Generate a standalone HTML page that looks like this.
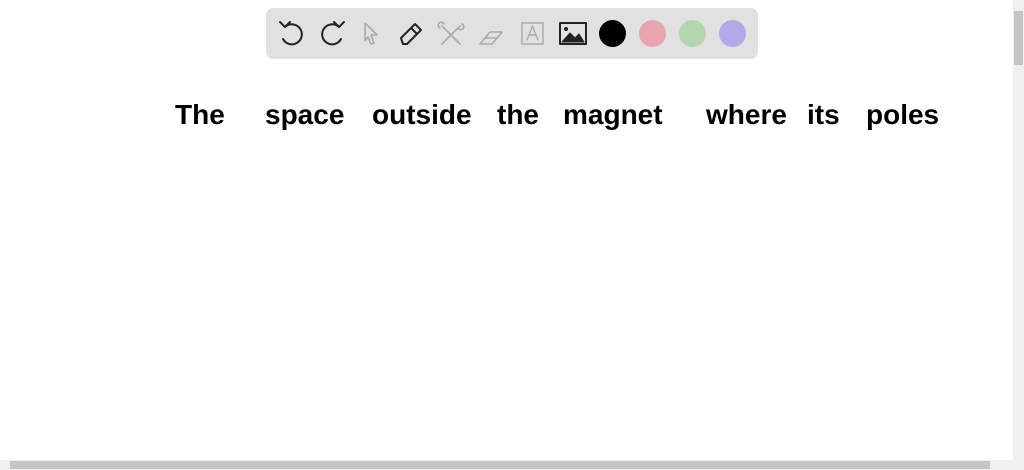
<!DOCTYPE html>
<html><head><style>
html,body{margin:0;padding:0;width:1024px;height:470px;overflow:hidden;background:#fff;position:relative;font-family:"Liberation Sans",sans-serif}
.tb{position:absolute;left:266px;top:8px;width:492px;height:51px;background:#e1e1e1;border-radius:7px}
.dot{position:absolute;top:12px;width:27px;height:27px;border-radius:50%}
.w{position:absolute;top:99px;font-size:28px;font-weight:bold;color:#000;white-space:nowrap;font-family:"Liberation Sans",sans-serif}
.vs{position:absolute;right:0;top:0;width:11px;height:460px;background:#f0f0f0}
.vt{position:absolute;right:1px;top:11px;width:9px;height:54px;background:#c4c4c4}
.hs{position:absolute;left:0;bottom:0;width:1024px;height:10px;background:#f0f0f0}
.ht{position:absolute;left:10px;bottom:1px;width:980px;height:8px;background:#c4c4c4}
</style></head><body>
<div class="tb">
<svg width="492" height="51" viewBox="0 0 492 51" fill="none" stroke-linecap="round" stroke-linejoin="round">
 <g stroke="#222" stroke-width="2">
  <path d="M19 19 A10 10 0 1 1 17 31"/><path d="M14 14 L19 19 L24 14"/>
  <path d="M73 19 A10 10 0 1 0 75 31"/><path d="M78 14 L73 19 L68 14"/>
 </g>
 <path d="M99 15 L111 27 L105 27 L108 35 L105 36 L102 29 L99 33 Z" stroke="#aaa" stroke-width="1.6"/>
 <path d="M137 36 L135 30 L149 16 L155 22 L141 36 Z M145 20 L151 26" stroke="#222" stroke-width="2"/>
 <g stroke="#aaa" stroke-width="1.6"><path d="M176 18 L194 36 M194 18 L176 36 M174 20 A3 3 0 1 1 178 16 M196 16 A3 3 0 1 1 192 20"/></g>
 <path d="M214 36 L224 24 L236 24 L226 36 Z M219 30 L231 30" stroke="#aaa" stroke-width="1.6"/>
 <rect x="256" y="15" width="21" height="21" stroke="#aaa" stroke-width="1.4"/>
 <path d="M261 32 L266.5 18 L272 32 M263 27 L270 27" stroke="#aaa" stroke-width="1.4"/>
 <rect x="294" y="15" width="26" height="21" stroke="#222" stroke-width="2"/>
 <circle cx="300" cy="21" r="2" fill="#222"/>
 <path d="M296 34 L304 25 L309 30 L313 26 L318 34 Z" fill="#222" stroke="#222"/>
</svg>
<div class="dot" style="left:333px;background:#000"></div>
<div class="dot" style="left:373px;background:#e8a5ae"></div>
<div class="dot" style="left:413px;background:#b3d6b1"></div>
<div class="dot" style="left:453px;background:#b0abe8"></div>
</div>
<div class="w" style="left:175px">The</div>
<div class="w" style="left:265px">space</div>
<div class="w" style="left:372px">outside</div>
<div class="w" style="left:497px">the</div>
<div class="w" style="left:563px">magnet</div>
<div class="w" style="left:706px">where</div>
<div class="w" style="left:807px">its</div>
<div class="w" style="left:866px">poles</div>
<div class="vs"><div class="vt"></div></div>
<div class="hs"><div class="ht"></div></div>
</body></html>
